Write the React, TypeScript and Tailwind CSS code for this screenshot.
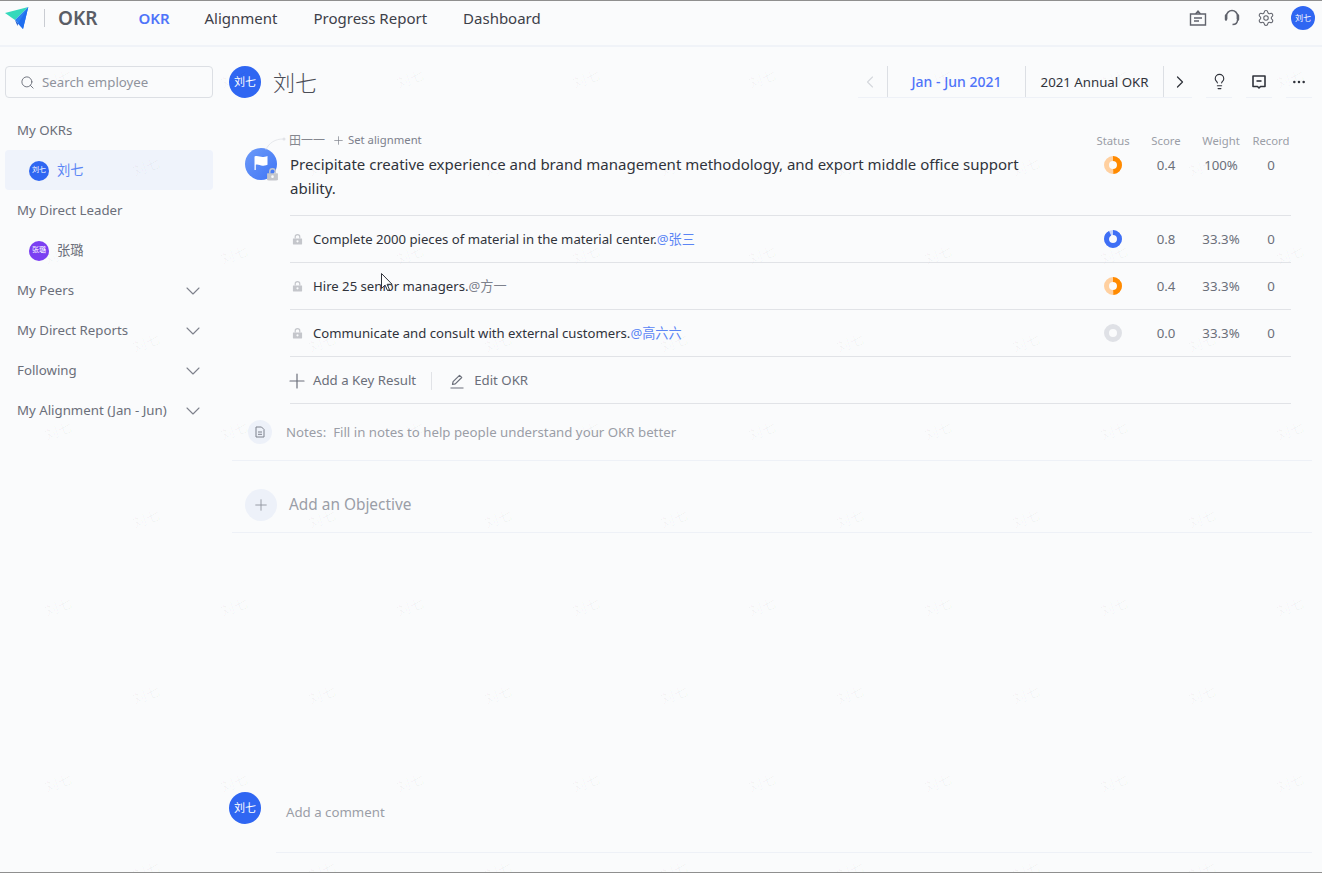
import { ChevronDown, ChevronLeft, ChevronRight, Ellipsis, Lightbulb, Plus, Search, Settings } from "lucide-react";

const font = "font-['Noto_Sans','Noto_Sans_CJK_SC',sans-serif]";

const keyResults = [
  { text: "Complete 2000 pieces of material in the material center.", at: "@张三", atColor: "text-[#5b85f5]", score: "0.8", ratio: 0.9, color: "#3f6ff5", track: "#c5d4fb" },
  { text: "Hire 25 senior managers.", at: "@方一", atColor: "text-[#7d818c]", score: "0.4", ratio: 0.48, color: "#ff8a00", track: "#ffd0a0" },
  { text: "Communicate and consult with external customers.", at: "@高六六", atColor: "text-[#5b85f5]", score: "0.0", ratio: 0, color: "#dfe1e6", track: "#dfe1e6" },
];

function Ring({ ratio, color, track }: { ratio: number; color: string; track: string }) {
  const c = 2 * Math.PI * 6.5;
  return (
    <svg width="18" height="18" viewBox="0 0 18 18" className="-rotate-90">
      <circle cx="9" cy="9" r="6.5" fill="none" stroke={track} strokeWidth="5" />
      <circle cx="9" cy="9" r="6.5" fill="none" stroke={color} strokeWidth="5" strokeDasharray={`${c * ratio} ${c}`} />
    </svg>
  );
}

function Avatar({ name, size, text, purple }: { name: string; size: string; text: string; purple?: boolean }) {
  return (
    <div className={`flex shrink-0 items-center justify-center rounded-full text-white ${size} ${text} ${purple ? "bg-[#7b3ff2]" : "bg-[#2f66f2]"}`}>
      {name}
    </div>
  );
}

function LockIcon({ className }: { className: string }) {
  return (
    <svg viewBox="0 0 12 12" className={className} fill="#c4c6cb">
      <path d="M1.5 4.8h9a.5.5 0 0 1 .5.5v5.7a.5.5 0 0 1-.5.5h-9a.5.5 0 0 1-.5-.5V5.3a.5.5 0 0 1 .5-.5z" />
      <path d="M3.5 5V3.2a2.5 2.5 0 0 1 5 0V5" fill="none" stroke="#c4c6cb" strokeWidth="1.3" />
      <circle cx="6" cy="8" r="1.2" fill="#fafbfc" />
    </svg>
  );
}

function Logo() {
  return (
    <svg width="24" height="24" viewBox="0 0 24 24">
      <path d="M0 7 L23.3 1 L10 14z" fill="#34d9bb" />
      <path d="M23.3 1 L10 14 L18 23z" fill="#2b7ff0" />
      <path d="M23.3 1 L13 17.4 L18 23z" fill="#1f6ef0" />
      <path d="M10 14 L13 17.4 L12.5 20z" fill="#1552c9" />
    </svg>
  );
}

function SideGroup({ label, chevron }: { label: string; chevron?: boolean }) {
  return (
    <div className="flex h-10 items-center justify-between pl-3 pr-2 pt-px text-[13.25px] text-[#6b6f7a]">
      <span>{label}</span>
      {chevron && <ChevronDown size={24} strokeWidth={1.1} className="text-[#7d818c]" />}
    </div>
  );
}

function Sidebar() {
  return (
    <aside className="w-[218px] shrink-0 pl-[5px] pt-[19px]">
      <div className="flex h-8 w-[208px] items-center gap-[7px] rounded border border-[#dcdfe4] pl-[14px] pt-px text-[13.25px] text-[#8f939c]">
        <Search size={15} strokeWidth={1.5} className="text-[#6b6f7a]" />
        <span>Search employee</span>
      </div>
      <div className="mt-3 w-[208px]">
        <SideGroup label="My OKRs" />
        <div className="flex h-10 items-center gap-2 rounded bg-[#eff3fb] pl-6 pt-px text-[13.25px] text-[#5b85f5]">
          <Avatar name="刘七" size="size-5" text="text-[7px]" />
          <span>刘七</span>
        </div>
        <SideGroup label="My Direct Leader" />
        <div className="flex h-10 items-center gap-2 pl-6 pt-px text-[13.25px] text-[#6b6f7a]">
          <Avatar name="张璐" size="size-5" text="text-[7px]" purple />
          <span>张璐</span>
        </div>
        <SideGroup label="My Peers" chevron />
        <SideGroup label="My Direct Reports" chevron />
        <SideGroup label="Following" chevron />
        <SideGroup label="My Alignment (Jan - Jun)" chevron />
      </div>
    </aside>
  );
}

function Toolbar() {
  return (
    <div className="flex items-center gap-[14px]">
      <div className="flex h-8 items-center border-b border-[#eef1f7] text-[13.25px]">
        <div className="flex h-[31px] w-[30px] items-center justify-center border-r border-[#dcdfe4] pr-[5px] text-[#d5d7dc]">
          <ChevronLeft size={20} strokeWidth={1.3} />
        </div>
        <div className="flex h-[31px] w-[138px] items-center justify-center border-r border-[#dcdfe4] text-[14px] font-medium text-[#4f74f9]">Jan - Jun 2021</div>
        <div className="flex h-[31px] w-[138px] items-center justify-center border-r border-[#dcdfe4] pt-[2px] text-[#30333b]">2021 Annual OKR</div>
        <div className="flex h-[31px] w-[28px] items-center justify-center pl-1 text-[#30333b]">
          <ChevronRight size={20} strokeWidth={1.5} />
        </div>
      </div>
      <div className="flex h-8 w-[26px] items-center justify-center border-b border-[#eef1f7] text-[#30333b]">
        <Lightbulb size={17} strokeWidth={1.6} />
      </div>
      <div className="flex h-8 w-[26px] items-center justify-center border-b border-[#eef1f7] text-[#30333b]">
        <svg width="16" height="16" viewBox="0 0 16 16" fill="none" stroke="currentColor" strokeWidth="1.6">
          <path d="M2 2h12v10.5h-4.5L8 14l-1.5-1.5H2z" strokeLinejoin="round" />
          <path d="M5.5 7h5" />
        </svg>
      </div>
      <div className="flex h-8 w-[26px] items-center justify-center border-b border-[#eef1f7] text-[#30333b]">
        <Ellipsis size={16} strokeWidth={1.8} />
      </div>
    </div>
  );
}

function Stats({ ring, score, weight }: { ring: React.ReactNode; score: string; weight: string }) {
  return (
    <div className="flex items-center text-[13.25px] text-[#6b6f7a]">
      <div className="flex w-[56px] justify-center">{ring}</div>
      <div className="w-[50px] pt-[2px] text-center">{score}</div>
      <div className="w-[60px] pt-[2px] text-center">{weight}</div>
      <div className="w-[40px] pt-[2px] text-center">0</div>
    </div>
  );
}

function Objective() {
  return (
    <div className="flex pl-4 pr-[21px] pt-[34px]">
      <div className="relative mt-[16px] size-8 shrink-0 rounded-full bg-linear-to-br from-[#6d9af8] to-[#3f74f5]">
        <svg width="18" height="18" viewBox="0 0 18 18" className="absolute left-[8px] top-[6px]" fill="#fff">
          <path d="M1.5 2.5c3-1.2 5.5.6 8 .6 1.5 0 3-.4 5-1v8.6c-2 .7-3.5 1-5 1-2.5 0-4.500-1.700-6.700-.9V16H1.5z" />
        </svg>
        <LockIcon className="absolute -bottom-[1px] -right-[2px] size-[13px] rounded-sm" />
        <svg width="22" height="14" viewBox="0 0 22 14" className="absolute -top-[11px] left-[20px]" fill="none">
          <path d="M1 12.5C4 6 10 2 18 2" stroke="#e6e8ec" strokeWidth="1" />
          <circle cx="19" cy="2" r="1.5" fill="#e1e3e7" />
        </svg>
      </div>
      <div className="ml-[13px] min-w-0 flex-1">
        <div className="flex h-[70px] justify-between">
          <div className="w-[760px]">
            <div className="flex h-[17px] items-center gap-[7px] text-[11.3px] text-[#7d818c]">
              <span className="-ml-px text-[12px] text-[#85878f]">田一一</span>
              <span className="flex items-center gap-[3px]">
                <Plus size={13} strokeWidth={1.3} />
                Set alignment
              </span>
            </div>
            <p className="mt-[3px] text-[15px] leading-6 text-[#30333b]">
              Precipitate creative experience and brand management methodology, and export middle office support ability.
            </p>
          </div>
          <div>
            <div className="flex h-[17px] items-center pt-[2px] text-center text-[11.3px] text-[#9a9ea7]">
              <div className="w-[56px]">Status</div>
              <div className="w-[50px]">Score</div>
              <div className="w-[60px]">Weight</div>
              <div className="w-[40px]">Record</div>
            </div>
            <div className="mt-[5px]">
              <Stats ring={<Ring ratio={0.48} color="#ff8a00" track="#ffd0a0" />} score="0.4" weight="100%" />
            </div>
          </div>
        </div>
        <div className="mt-[13px] border-t border-[#e1e3e7]">
          {keyResults.map((kr) => (
            <div key={kr.text} className="flex h-[47px] items-center justify-between border-b border-[#e1e3e7]">
              <div className="flex items-center pt-px text-[13.15px] text-[#30333b]">
                <LockIcon className="ml-[2px] mr-[10px] size-[11px]" />
                <span>{kr.text}</span>
                <span className={kr.atColor}>{kr.at}</span>
              </div>
              <Stats ring={<Ring ratio={kr.ratio} color={kr.color} track={kr.track} />} score={kr.score} weight="33.3%" />
            </div>
          ))}
          <div className="flex h-[47px] items-center border-b border-[#e1e3e7] pt-px text-[13.25px] text-[#6b6f7a]">
            <Plus size={24} strokeWidth={1.2} className="-ml-[5px] mr-[4px]" />
            <span>Add a Key Result</span>
            <span className="ml-[15px] mr-[17px] h-[18px] w-px bg-[#e1e3e7]" />
            <svg width="16" height="16" viewBox="0 0 16 16" fill="none" stroke="currentColor" strokeWidth="1.2" className="mr-[9px]">
              <path d="M1.5 15h13M3.5 11.5l.6-2.8 6.4-6.4 2.2 2.2-6.4 6.4z" strokeLinejoin="round" />
            </svg>
            <span>Edit OKR</span>
          </div>
        </div>
      </div>
    </div>
  );
}

function Main() {
  return (
    <main className="flex min-w-0 flex-1 flex-col pl-[11px] pr-[10px] pt-[19px]">
      <div className="flex h-8 items-center justify-between">
        <div className="flex items-center gap-3">
          <Avatar name="刘七" size="size-8" text="text-[11px]" />
          <span className="text-[22px] font-light text-[#4a4d56]">刘七</span>
        </div>
        <Toolbar />
      </div>
      <Objective />
      <div className="ml-[3px] flex h-[57px] items-center border-b border-[#eef1f7] pl-4 text-[13.25px] text-[#9a9ea7]">
        <div className="mr-[14px] flex size-6 items-center justify-center rounded-full bg-[#edf1f9]">
          <svg width="12" height="12" viewBox="0 0 12 12" fill="none" stroke="#7d818c" strokeWidth="1">
            <path d="M2 1h5.5L10 3.5V11H2z" />
            <path d="M4 6h4M4 8.3h4" />
          </svg>
        </div>
        <span className="whitespace-pre pt-[2px]">Notes:  Fill in notes to help people understand your OKR better</span>
      </div>
      <div className="ml-[3px] flex h-[72px] items-center border-b border-[#eef1f7] pl-[13px] pt-4 text-[15.4px] text-[#9a9ea7]">
        <div className="mr-3 flex size-8 items-center justify-center rounded-full bg-[#edf1f9]">
          <Plus size={18} strokeWidth={1.2} className="text-[#8f939c]" />
        </div>
        <span>Add an Objective</span>
      </div>
      <div className="mt-auto mb-[19px] flex">
        <Avatar name="刘七" size="size-8" text="text-[11px]" />
        <div className="ml-[15px] h-[61px] flex-1 border-b border-[#eef1f7] pl-[10px] pt-[11px] text-[13.25px] text-[#9a9ea7]">
          Add a comment
        </div>
      </div>
    </main>
  );
}

function Watermark() {
  const rows = Array.from({ length: 10 }, (_, i) => i);
  return (
    <div className="pointer-events-none absolute inset-0 overflow-hidden">
      {rows.map((r) => (
        <div key={r} className={`flex h-[88px] items-center ${r % 2 ? "pl-[132px]" : "pl-[44px]"} ${r === 0 ? "mt-[33px]" : ""}`}>
          {Array.from({ length: r % 2 ? 7 : 8 }, (_, c) => (
            <span key={c} className="w-[176px] shrink-0">
              <span className="inline-block -rotate-[20deg] text-[14px] text-black/[0.035]">刘七</span>
            </span>
          ))}
        </div>
      ))}
    </div>
  );
}

export default function App() {
  return (
    <div className={`relative flex h-[873px] w-full flex-col overflow-hidden border-y border-[#8f8f8f] bg-[#fafbfc] ${font}`}>
      <header className="flex h-[46px] shrink-0 items-center border-b-2 border-[#f0f3f8] pb-[10px] pl-[5px] pr-[7px]">
        <Logo />
        <span className="ml-[15px] h-[18px] w-px bg-[#c9ccd2]" />
        <span className="ml-[13px] text-[19px] font-semibold text-[#5a5d66]">OKR</span>
        <nav className="ml-[41px] flex items-center gap-9 text-[15px] text-[#3d4049]">
          <span className="-mr-[2px] w-8 font-semibold text-[#4f74f9]">OKR</span>
          <span>Alignment</span>
          <span>Progress Report</span>
          <span>Dashboard</span>
        </nav>
        <div className="ml-auto flex items-center gap-[15px] text-[#60636c]">
          <svg width="18" height="18" viewBox="0 0 18 18" fill="none" stroke="currentColor" strokeWidth="1.4">
            <path d="M1.5 5h15v11h-15zM6.5 5l2.5-3 2.5 3M5 9h8M5 12h5" />
          </svg>
          <svg width="20" height="20" viewBox="0 0 20 20" fill="none" stroke="currentColor">
            <path d="M4.5 11V8a5.5 5.5 0 0 1 11 0v3" strokeWidth="1.5" />
            <path d="M4 7.5v4M16 7.5v4" strokeWidth="2.4" strokeLinecap="round" />
            <path d="M15.5 12c0 3-2 4.5-5 4.5" strokeWidth="1.5" />
          </svg>
          <Settings size={18} strokeWidth={1.4} className="mr-px" />
          <Avatar name="刘七" size="size-6" text="text-[8px]" />
        </div>
      </header>
      <div className="flex min-h-0 flex-1">
        <Sidebar />
        <Main />
      </div>
      <Watermark />
      <svg width="12" height="19" viewBox="0 0 12 19" className="absolute left-[381px] top-[272px]" fill="#fff" stroke="#30333b" strokeWidth="1">
        <path d="M.5.5v15l3.6-3.4 2.4 5.4 2-.9-2.4-5.3h5z" />
      </svg>
    </div>
  );
}
